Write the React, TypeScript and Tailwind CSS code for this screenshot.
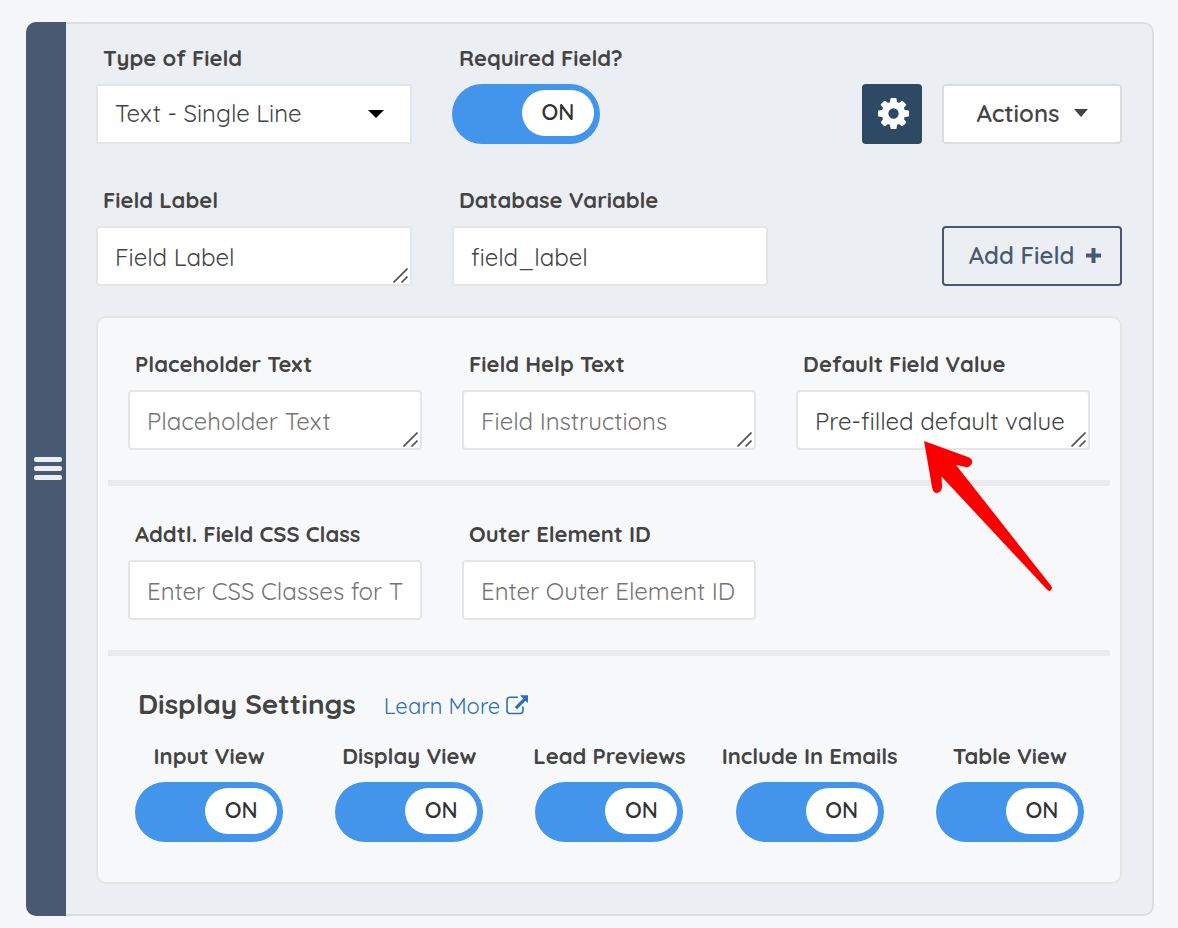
import { useState, type ReactNode } from 'react';

const inputClass =
  'block h-[60px] w-full rounded border-2 border-[#e5e5e5] bg-white px-[17px] text-2xl text-[#444] placeholder:text-[#757575] outline-none';

interface FieldProps {
  id: string;
  label: string;
  children: ReactNode;
}

function Field({ id, label, children }: FieldProps) {
  return (
    <div>
      <label htmlFor={id} className="mb-3 block pl-[7px] text-[22px] leading-7 font-bold whitespace-nowrap">{label}</label>
      {children}
    </div>
  );
}

interface TextProps {
  id: string;
  value?: string;
  placeholder?: string;
}

function TextBox({ id, value, placeholder }: TextProps) {
  return <input id={id} type="text" defaultValue={value} placeholder={placeholder} className={`${inputClass} pt-0.5`} />;
}

function TextArea({ id, value, placeholder }: TextProps) {
  return (
    <div className="relative">
      <textarea
        id={id}
        rows={1}
        defaultValue={value}
        placeholder={placeholder}
        className={`${inputClass} resize-none overflow-hidden py-[11px] leading-9 whitespace-nowrap`}
      />
      <svg className="pointer-events-none absolute right-1 bottom-[3px]" width="15" height="15" viewBox="0 0 15 15" fill="none" stroke="#555" strokeWidth="1.7">
        <path d="M0.5 14.5 L14.5 0.5 M8.5 14.5 L14.5 8.5" />
      </svg>
    </div>
  );
}

function Toggle({ id }: { id: string }) {
  const [on, setOn] = useState(true);

  return (
    <label className={on ? 'flex h-[60px] w-[148px] cursor-pointer justify-end rounded-full bg-[#4395ec] p-1.5' : 'flex h-[60px] w-[148px] cursor-pointer rounded-full bg-[#c3c9d0] p-1.5'}>
      <input id={id} type="checkbox" className="sr-only" checked={on} onChange={(e) => setOn(e.target.checked)} />
      <span className="flex h-[46px] w-[72px] items-center justify-center rounded-full bg-white pb-0.5 text-[22px] leading-7 font-semibold text-[#333]">
        {on ? 'ON' : 'OFF'}
      </span>
    </label>
  );
}

function GearIcon() {
  return (
    <svg width="31" height="31" viewBox="0 128 1536 1536" fill="currentColor" aria-hidden="true">
      <path d="M1024 896q0-106-75-181t-181-75-181 75-75 181 75 181 181 75 181-75 75-181zm512-109v222q0 12-8 23t-20 13l-185 28q-19 54-39 91 35 50 107 138 10 12 10 25t-9 23q-27 37-99 108t-94 71q-12 0-26-9l-138-108q-44 23-91 38-16 136-29 186-7 28-36 28h-222q-14 0-24.500-8.500t-11.500-21.500l-28-184q-49-16-90-37l-141 107q-10 9-25 9-14 0-25-11-126-114-165-168-7-10-7-23 0-12 8-23 15-21 51-66.500t54-70.500q-27-50-41-99l-183-27q-13-2-21-12.500t-8-23.500v-222q0-12 8-23t19-13l186-28q14-46 39-92-40-57-107-138-10-12-10-24 0-10 9-23 26-36 98.500-107.500t94.500-71.500q13 0 26 10l138 107q44-23 91-38 16-136 29-186 7-28 36-28h222q14 0 24.500 8.500t11.500 21.500l28 184q49 16 90 37l142-107q9-9 24-9 13 0 25 10 129 119 165 170 7 8 7 22 0 12-8 23-15 21-51 66.500t-54 70.500q26 50 41 98l183 28q13 2 21 12.500t8 23.500z" />
    </svg>
  );
}

function ExternalIcon() {
  return (
    <svg className="mb-0.5" width="22" height="20" viewBox="0 0 22 20" fill="none" aria-hidden="true">
      <path d="M12 2.200 H4 Q1 2.200 1 5.200 V15.500 Q1 18.500 4 18.500 H14 Q17 18.500 17 15.500 V11.500" stroke="currentColor" strokeWidth="1.600" />
      <path d="M14 0.300 H22 V8 L19.500 5.700 L11 14.200 L8.800 12 L17.200 3.500 Z" fill="currentColor" />
    </svg>
  );
}

function PointerArrow() {
  return (
    <svg className="pointer-events-none absolute top-[86px] left-[120px] z-10" width="144" height="160" viewBox="0 0 144 160" aria-hidden="true">
      <path
        d="M8 5 L52 21 Q57 23 56 27 Q54 32 50 31 L40 29 L134.500 149 Q137 152 135 154 Q133 156 131 153.500 L25.500 40.500 L26 50 Q26 56 21 57 Q17 57 16 51 Z"
        fill="#fb0000"
      />
    </svg>
  );
}

const displayViews = [
  { id: 'input-view', label: 'Input View' },
  { id: 'display-view', label: 'Display View' },
  { id: 'lead-previews', label: 'Lead Previews' },
  { id: 'include-in-emails', label: 'Include In Emails' },
  { id: 'table-view', label: 'Table View' },
];

export default function App() {
  return (
    <main className="min-h-screen bg-[#f5f7fb] pt-[22px] pr-6 pb-3 pl-[26px] font-['Quicksand','Lato',sans-serif] text-[#444]">
      <div className="flex overflow-hidden rounded-[10px]">
        <button type="button" aria-label="Reorder field" className="flex w-10 shrink-0 flex-col items-center justify-center gap-1 bg-[#475a72] pb-0.5 pl-1">
          <span className="h-[5px] w-7 rounded-xs bg-[#ebeef3]" />
          <span className="h-[5px] w-7 rounded-xs bg-[#ebeef3]" />
          <span className="h-[5px] w-7 rounded-xs bg-[#ebeef3]" />
        </button>

        <div className="min-w-0 flex-1 rounded-r-[10px] border-2 border-l-0 border-[#dadde2] bg-[#ebeef3] px-[30px] pt-5 pb-[30px]">
          <div className="grid grid-cols-[1fr_1fr_314px] items-end gap-x-10 gap-y-[42px]">
            <Field id="field-type" label="Type of Field">
              <div className="relative">
                <select id="field-type" className="block h-[60px] w-full appearance-none border-2 border-[#e5e5e5] bg-white px-[17px] pb-0.5 text-2xl text-[#444] outline-none">
                  <option>Text - Single Line</option>
                </select>
                <svg className="pointer-events-none absolute top-[26px] right-7" width="16" height="8" viewBox="0 0 16 8">
                  <path d="M0 0 H16 L8 8 Z" fill="#000" />
                </svg>
              </div>
            </Field>
            <Field id="required" label="Required Field?">
              <Toggle id="required" />
            </Field>
            <div className="flex justify-end gap-5">
              <button type="button" aria-label="Field settings" className="flex size-[60px] items-center justify-center rounded bg-[#2e4963] pb-0.5 pl-0.5 text-white">
                <GearIcon />
              </button>
              <button type="button" className="flex h-[60px] w-[180px] items-center justify-center gap-3.5 rounded border-2 border-[#ddd] bg-white pb-0.5 text-2xl font-semibold">
                Actions
                <svg width="14" height="8" viewBox="0 0 14 8" fill="currentColor">
                  <path d="M0 0 H14 L7 8 Z" />
                </svg>
              </button>
            </div>

            <Field id="field-label" label="Field Label">
              <TextArea id="field-label" value="Field Label" />
            </Field>
            <Field id="db-variable" label="Database Variable">
              <TextBox id="db-variable" value="field_label" />
            </Field>
            <div className="flex justify-end">
              <button type="button" className="flex h-[60px] w-[180px] items-center justify-center gap-3 rounded border-2 border-[#475a72] pb-0.5 pl-1.5 text-2xl font-semibold text-[#475a72]">
                Add Field
                <svg width="15" height="15" viewBox="0 0 15 15" fill="currentColor">
                  <path d="M5.500 0 H9.500 V5.500 H15 V9.500 H9.500 V15 H5.500 V9.500 H0 V5.500 H5.500 Z" />
                </svg>
              </button>
            </div>
          </div>

          <section className="mt-[30px] rounded-[10px] border-2 border-[#e5e5e5] bg-[#f7f8fa] px-2.5 pb-10">
            <div className="grid grid-cols-3 gap-10 border-b-6 border-[#e8eaec] px-5 pt-8 pb-[30px]">
              <Field id="placeholder" label="Placeholder Text">
                <TextArea id="placeholder" placeholder="Placeholder Text" />
              </Field>
              <Field id="help-text" label="Field Help Text">
                <TextArea id="help-text" placeholder="Field Instructions" />
              </Field>
              <div className="relative">
                <Field id="default-value" label="Default Field Value">
                  <TextArea id="default-value" value="Pre-filled default value" />
                </Field>
                <PointerArrow />
              </div>
            </div>

            <div className="grid grid-cols-3 gap-10 border-b-6 border-[#e8eaec] px-5 pt-[34px] pb-[30px]">
              <Field id="css-class" label="Addtl. Field CSS Class">
                <TextBox id="css-class" placeholder="Enter CSS Classes for This Field" />
              </Field>
              <Field id="outer-id" label="Outer Element ID">
                <TextBox id="outer-id" placeholder="Enter Outer Element ID" />
              </Field>
            </div>

            <div className="mt-[30px] flex items-baseline gap-7 pl-[30px]">
              <h2 className="text-[28px] leading-9 font-bold">Display Settings</h2>
              <a href="#display-settings" className="flex items-center gap-1.5 text-[22px] leading-7 text-[#2b6fb8]">
                Learn More
                <ExternalIcon />
              </a>
            </div>
            <div className="mt-5 grid grid-cols-5 pl-px">
              {displayViews.map((view) => (
                <div key={view.id} className="flex flex-col items-center gap-3">
                  <label htmlFor={view.id} className="text-[22px] leading-7 font-bold whitespace-nowrap">{view.label}</label>
                  <Toggle id={view.id} />
                </div>
              ))}
            </div>
          </section>
        </div>
      </div>
    </main>
  );
}
